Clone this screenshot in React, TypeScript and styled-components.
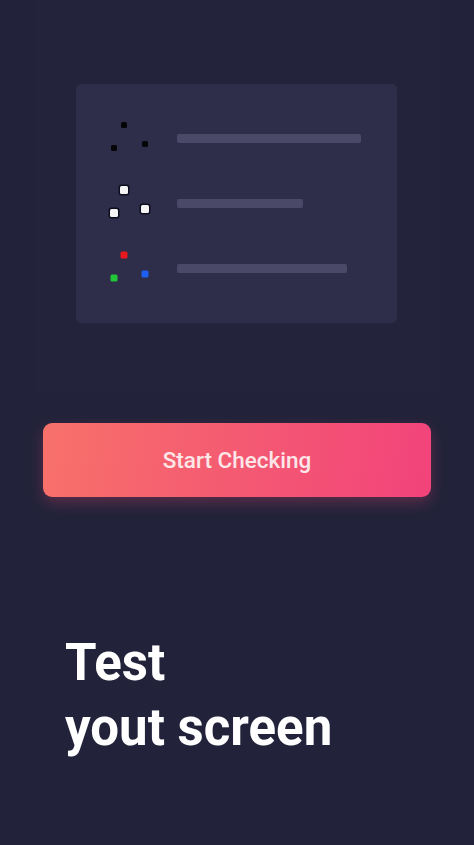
import React from "react";
import styled, { createGlobalStyle } from "styled-components";

const Global = createGlobalStyle`
  html, body { margin: 0; padding: 0; background: #22233a; }
  body { font-family: Roboto, "Liberation Sans", Arial, sans-serif; }
  * { box-sizing: border-box; }
`;

const Page = styled.div`
  width: 474px;
  height: 845px;
  background: #22233a;
  display: flex;
  flex-direction: column;
  overflow: hidden;
`;

const Hero = styled.section`
  margin: 0 34px;
  padding: 84px 0 0 42px;
  height: 392px;
  background: #23243b;
`;

const Card = styled.div`
  width: 321px;
  height: 239px;
  background: #2e2e4a;
  border-radius: 5px;
  padding: 38px 0 0 35px;
  display: flex;
  flex-direction: column;
  gap: 35px;
`;

const Row = styled.div`
  display: flex;
  align-items: center;
  gap: 26px;
  height: 30px;
`;

const Bar = styled.div<{ $w: number }>`
  width: ${(p) => p.$w}px;
  height: 9px;
  border-radius: 2px;
  background: #4a4a68;
  margin-top: 3px;
`;

const Button = styled.button`
  margin: 31px 0 0 43px;
  width: 388px;
  height: 74px;
  border: none;
  border-radius: 9px;
  background: linear-gradient(100deg, #f8716a 0%, #f45a72 50%, #f2437b 100%);
  box-shadow: 0 6px 14px rgba(235, 70, 110, 0.28);
  color: #fde6e8;
  font-family: Roboto, "Liberation Sans", Arial, sans-serif;
  font-size: 22.5px;
  font-weight: 500;
  letter-spacing: 0;
  cursor: pointer;
`;

const Title = styled.h1`
  margin: 133px 0 0 65px;
  font-family: Roboto, "Liberation Sans", Arial, sans-serif;
  font-size: 51px;
  line-height: 65px;
  font-weight: 700;
  color: #ffffff;
  letter-spacing: 0;
`;

type Dot = { x: number; y: number; c: string; r: number };

const Cluster: React.FC<{ colors: [string, string, string]; size: number; ring?: boolean }> = ({
  colors,
  size,
  ring,
}) => {
  const pts: Dot[] = [
    { x: 13, y: 3, c: colors[0], r: size },
    { x: 3, y: 26, c: colors[1], r: size },
    { x: 34, y: 22, c: colors[2], r: size },
  ];
  return (
    <svg width="40" height="30" viewBox="0 0 40 30" style={{ overflow: "visible", flexShrink: 0 }}>
      {pts.map((p, i) => (
        <g key={i}>
          {ring && (
            <rect
              x={p.x - p.r / 2 - 1.5}
              y={p.y - p.r / 2 - 1.5}
              width={p.r + 3}
              height={p.r + 3}
              rx={3}
              fill="#0d0d20"
            />
          )}
          <rect x={p.x - p.r / 2} y={p.y - p.r / 2} width={p.r} height={p.r} rx={1.5} fill={p.c} />
        </g>
      ))}
    </svg>
  );
};

export default function App() {
  return (
    <Page>
      <Global />
      <Hero>
        <Card>
          <Row>
            <Cluster colors={["#050508", "#050508", "#050508"]} size={6} />
            <Bar $w={184} />
          </Row>
          <Row>
            <Cluster colors={["#f4f4f4", "#f4f4f4", "#f4f4f4"]} size={8} ring />
            <Bar $w={126} />
          </Row>
          <Row>
            <Cluster colors={["#e8181f", "#22c43a", "#1e5ff0"]} size={7} />
            <Bar $w={170} />
          </Row>
        </Card>
      </Hero>
      <Button>Start Checking</Button>
      <Title>
        Test
        <br />
        yout screen
      </Title>
    </Page>
  );
}
